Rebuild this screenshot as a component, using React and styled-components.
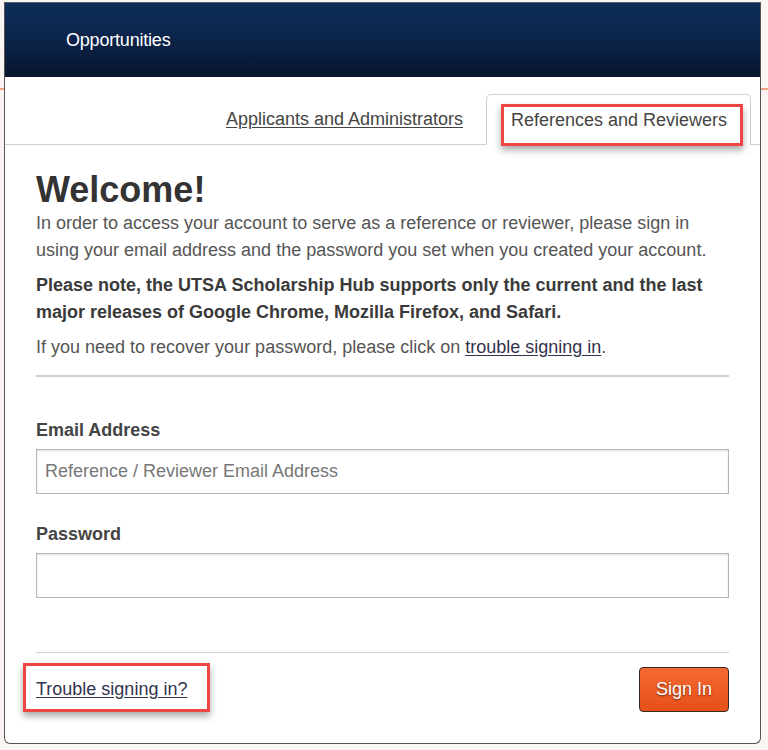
import React from "react";
import styled, { createGlobalStyle } from "styled-components";

const Global = createGlobalStyle`
  html, body { margin: 0; padding: 0; }
  body {
    background:
      linear-gradient(to bottom, transparent 88px, #f3a27f 88px, #f3a27f 90px, transparent 90px),
      #faf5f3;
    font-family: "Liberation Sans", Arial, sans-serif;
    min-height: 750px;
  }
  #root { padding-top: 2px; }
`;

const Panel = styled.div`
  margin-left: 4px;
  width: 757px;
  box-sizing: border-box;
  background: #fff;
  border: 1px solid #555;
  border-top-color: #5a6270;
  border-radius: 0 0 6px 6px;
  overflow: hidden;
`;

const Header = styled.div`
  height: 74px;
  display: flex;
  align-items: center;
  padding-left: 61px;
  background: linear-gradient(to bottom, #0f2e5a 0%, #0b2247 55%, #07142b 100%);
  color: #fff;
  font-size: 18px;
  letter-spacing: -0.2px;
`;

const TabBar = styled.div`
  height: 68px;
  box-sizing: border-box;
  display: flex;
  justify-content: flex-end;
  align-items: flex-end;
  border-bottom: 1px solid #cfcfcf;
  padding-right: 9px;
`;

const Tab = styled.div`
  position: relative;
  height: 51px;
  box-sizing: border-box;
  padding: 12px 0 0 24px;
  font-size: 18px;
  line-height: 27px;
  white-space: nowrap;
  color: #444;
  margin-bottom: -1px;
  ${(p) =>
    p.$active
      ? `
    width: 265px;
    background: #fff;
    border: 1px solid #cfcfcf;
    border-bottom: none;
    border-radius: 5px 5px 0 0;
  `
      : `
    text-decoration: underline;
    text-underline-offset: 2px;
    padding-right: 23px;
  `}
`;

const Highlight = styled.div`
  position: absolute;
  left: ${(p) => p.$l}px;
  top: ${(p) => p.$t}px;
  width: ${(p) => p.$w}px;
  height: ${(p) => p.$h}px;
  box-sizing: border-box;
  border: 3px solid #f04545;
  box-shadow: 0 4px 7px rgba(0, 0, 0, 0.35);
  pointer-events: none;
`;

const Content = styled.div`
  padding: 25px 31px 0 31px;
`;

const Title = styled.h1`
  margin: 0;
  font-size: 36px;
  line-height: 40px;
  font-weight: bold;
  color: #333;
`;

const Para = styled.p`
  margin: 0 0 8px 0;
  font-size: 18px;
  line-height: 27px;
  color: ${(p) => (p.$bold ? "#3a3a3a" : "#555")};
  font-weight: ${(p) => (p.$bold ? "bold" : "normal")};
`;

const InlineLink = styled.a`
  color: #33334d;
  text-decoration: underline;
  text-underline-offset: 2px;
`;

const Rule = styled.div`
  height: ${(p) => p.$h}px;
  background: #cfcfcf;
  margin-top: ${(p) => p.$mt}px;
`;

const Label = styled.label`
  display: block;
  font-size: 18px;
  line-height: 27px;
  font-weight: bold;
  color: #444;
  margin-top: ${(p) => p.$mt}px;
`;

const Input = styled.input`
  display: block;
  width: 100%;
  height: 45px;
  box-sizing: border-box;
  margin-top: 5px;
  border: 1px solid #b5b5b5;
  box-shadow: inset 0 1px 2px rgba(0, 0, 0, 0.12);
  padding: 0 8px;
  font-family: "Liberation Sans", Arial, sans-serif;
  font-size: 18px;
  color: #333;
  outline: none;
  &::placeholder { color: #777; }
`;

const Footer = styled.div`
  position: relative;
  display: flex;
  justify-content: space-between;
  align-items: center;
  padding: 14px 31px 31px 31px;
`;

const FooterLink = styled.a`
  font-size: 18px;
  color: #33334d;
  text-decoration: underline;
  text-underline-offset: 2px;
`;

const Button = styled.button`
  width: 90px;
  height: 45px;
  border: 1px solid #3a2a24;
  border-radius: 4px;
  background: linear-gradient(to bottom, #f46a34 0%, #ee5a22 60%, #e5501b 100%);
  color: #fff;
  font-family: "Liberation Sans", Arial, sans-serif;
  font-size: 18px;
  text-shadow: 0 1px 2px rgba(0, 0, 0, 0.55);
  cursor: pointer;
`;

export default function App() {
  return (
    <>
      <Global />
      <Panel>
        <Header>Opportunities</Header>
        <TabBar>
          <Tab>Applicants and Administrators</Tab>
          <Tab $active>
            References and Reviewers
            <Highlight $l={14} $t={9} $w={242} $h={42} />
          </Tab>
        </TabBar>
        <Content>
          <Title>Welcome!</Title>
          <Para>
            In order to access your account to serve as a reference or reviewer, please sign in
            using your email address and the password you set when you created your account.
          </Para>
          <Para $bold>
            Please note, the UTSA Scholarship Hub supports only the current and the last major
            releases of Google Chrome, Mozilla Firefox, and Safari.
          </Para>
          <Para>
            If you need to recover your password, please click on{" "}
            <InlineLink href="#">trouble signing in</InlineLink>.
          </Para>
          <Rule $h={2} $mt={14} />
          <Label $mt={40}>Email Address</Label>
          <Input placeholder="Reference / Reviewer Email Address" />
          <Label $mt={27}>Password</Label>
          <Input type="password" />
          <Rule $h={1} $mt={54} />
        </Content>
        <Footer>
          <FooterLink href="#">Trouble signing in?</FooterLink>
          <Button>Sign In</Button>
          <Highlight $l={18} $t={10} $w={187} $h={49} />
        </Footer>
      </Panel>
    </>
  );
}
